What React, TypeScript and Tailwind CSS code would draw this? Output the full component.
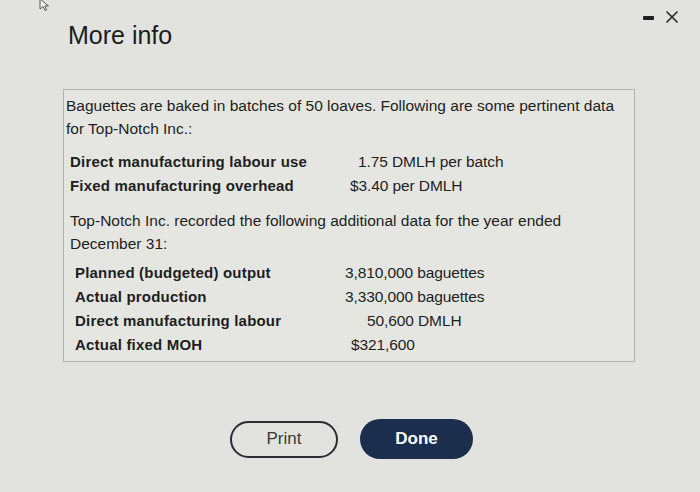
import { X } from "lucide-react";

const firstRows = [
  { label: "Direct manufacturing labour use", value: "1.75 DMLH per batch", pad: "pl-[8px]" },
  { label: "Fixed manufacturing overhead", value: "$3.40 per DMLH", pad: "pl-0" },
];

const secondRows = [
  { label: "Planned (budgeted) output", value: "3,810,000 baguettes", pad: "pl-0" },
  { label: "Actual production", value: "3,330,000 baguettes", pad: "pl-0" },
  { label: "Direct manufacturing labour", value: "50,600 DMLH", pad: "pl-[22px]" },
  { label: "Actual fixed MOH", value: "$321,600", pad: "pl-[6px]" },
];

export default function App() {
  return (
    <div
      className="relative w-[700px] h-[492px] overflow-hidden bg-[#e2e3df] text-[#1e1e1e]"
      style={{ fontFamily: '"Liberation Sans", Arial, sans-serif' }}
    >
      {/* cursor */}
      <svg className="absolute left-[38px] top-[-2px]" width="14" height="14" viewBox="0 0 14 14">
        <path d="M2 1 L2 11 L5 8.5 L7 12.5 L8.6 11.8 L6.8 8 L10.5 8 Z" fill="#f4f4f4" stroke="#444" strokeWidth="0.9" />
      </svg>

      {/* window controls */}
      <div className="absolute right-[18px] top-[7px] flex items-center gap-[8px]">
        <div className="w-[11px] h-[4px] bg-[#1e1e1e] rounded-[1px] mt-[2px]" />
        <X size={20} strokeWidth={2} className="text-[#2a2a2a]" />
      </div>

      <div className="pl-[68px] pt-[19px]">
        <h1 className="text-[25px] leading-[32px] text-[#1c1c1c]">More info</h1>
      </div>

      <div className="ml-[63px] mt-[38px] w-[572px] h-[273px] border border-[#b3b4b1] bg-[#e5e6e2] pt-[4px]">
        <p className="pl-[2px] text-[15.5px] leading-[23px] w-[560px]">
          Baguettes are baked in batches of 50 loaves. Following are some pertinent data for Top-Notch Inc.:
        </p>

        <div className="mt-[10px] pl-[6px] flex flex-col">
          {firstRows.map((r) => (
            <div key={r.label} className="flex h-[24px] items-center">
              <div className="w-[280px] font-bold text-[15px] tracking-[0.2px]">{r.label}</div>
              <div className={`text-[15.5px] tracking-[-0.1px] ${r.pad}`}>{r.value}</div>
            </div>
          ))}
        </div>

        <p className="mt-[11px] pl-[6px] text-[15.5px] leading-[23px] w-[520px]">
          Top-Notch Inc. recorded the following additional data for the year ended December 31:
        </p>

        <div className="mt-[6px] pl-[11px] flex flex-col">
          {secondRows.map((r) => (
            <div key={r.label} className="flex h-[24px] items-center">
              <div className="w-[270px] font-bold text-[15px] tracking-[0.2px]">{r.label}</div>
              <div className={`text-[15.5px] tracking-[-0.1px] ${r.pad}`}>{r.value}</div>
            </div>
          ))}
        </div>
      </div>

      <div className="mt-[57px] pl-[230px] flex items-center gap-[22px]">
        <button className="w-[108px] h-[37px] rounded-full border-2 border-[#2a2d33] text-[17px] text-[#3a3a3a]">
          Print
        </button>
        <button className="w-[113px] h-[40px] rounded-full bg-[#1b2e4d] text-white text-[17px] font-semibold">
          Done
        </button>
      </div>
    </div>
  );
}
